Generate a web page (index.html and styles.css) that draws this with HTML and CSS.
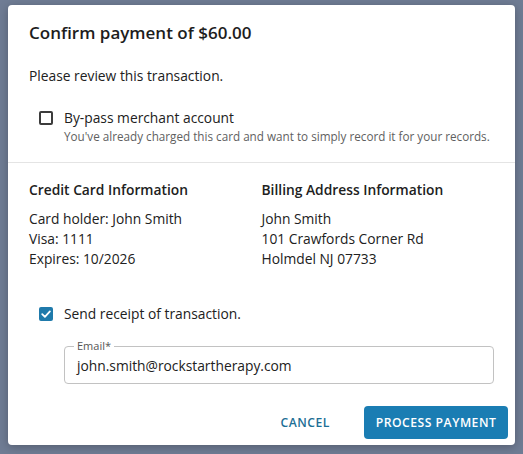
FILE: index.html
```html
<!DOCTYPE html>
<html lang="en">
<head>
<meta charset="utf-8">
<title>Confirm payment</title>
<link rel="stylesheet" href="styles.css">
</head>
<body>
<div class="modal" role="dialog" aria-labelledby="dlg-title">
  <div class="top">
    <h1 id="dlg-title" class="title">Confirm payment of $60.00</h1>
    <p class="intro">Please review this transaction.</p>
    <div class="check-row">
      <span class="box"></span>
      <div class="check-text">
        <div class="check-label">By-pass merchant account</div>
        <div class="check-help">You've already charged this card and want to simply record it for your records.</div>
      </div>
    </div>
  </div>
  <div class="divider"></div>
  <div class="bottom">
    <div class="info-grid">
      <div class="info-col">
        <h2 class="info-head">Credit Card Information</h2>
        <div class="info-line">Card holder: John Smith</div>
        <div class="info-line">Visa: 1111</div>
        <div class="info-line">Expires: 10/2026</div>
      </div>
      <div class="info-col">
        <h2 class="info-head">Billing Address Information</h2>
        <div class="info-line">John Smith</div>
        <div class="info-line">101 Crawfords Corner Rd</div>
        <div class="info-line">Holmdel NJ 07733</div>
      </div>
    </div>
    <div class="check-row receipt">
      <span class="box checked">
        <svg viewBox="0 0 14 14" width="14" height="14"><path d="M3.2 7.2 L5.9 9.8 L10.9 4.4" fill="none" stroke="#fff" stroke-width="1.8" stroke-linecap="round" stroke-linejoin="round"/></svg>
      </span>
      <div class="check-label">Send receipt of transaction.</div>
    </div>
    <fieldset class="field">
      <legend class="field-label">Email*</legend>
      <div class="field-value">john.smith@rockstartherapy.com</div>
    </fieldset>
  </div>
  <div class="actions">
    <button class="btn btn-text" type="button">CANCEL</button>
    <button class="btn btn-primary" type="button">PROCESS PAYMENT</button>
  </div>
</div>
</body>
</html>
```

FILE: styles.css
```css
html, body {
  margin: 0;
  padding: 0;
}
body {
  background: #6f7c94;
  font-family: "Open Sans", "Liberation Sans", sans-serif;
  color: #212121;
  padding: 5px 8px 9px 8px;
  height: 454px;
  box-sizing: border-box;
}
.modal {
  background: #fff;
  border-radius: 4px;
  box-shadow: 0 2px 10px rgba(0, 0, 0, 0.25);
  height: 440px;
  box-sizing: border-box;
  display: flex;
  flex-direction: column;
}
.top {
  padding: 16px 21px 0 21px;
}
.title {
  margin: 0;
  font-size: 17px;
  line-height: 24px;
  font-weight: 600;
  color: #1d1d1d;
}
.intro {
  margin: 21px 0 0 0;
  font-size: 13.8px;
  line-height: 20px;
}
.check-row {
  display: flex;
  align-items: flex-start;
  gap: 11px;
  margin: 22px 0 0 10px;
}
.box {
  flex: none;
  width: 14px;
  height: 14px;
  box-sizing: border-box;
  border: 2px solid #3c3c3c;
  border-radius: 2px;
  margin-top: 3px;
  display: flex;
  align-items: center;
  justify-content: center;
}
.box.checked {
  background: #1f7aab;
  border-color: #1f7aab;
}
.box.checked svg {
  flex: none;
}
.check-label {
  font-size: 13.8px;
  line-height: 20px;
}
.check-help {
  font-size: 11.7px;
  line-height: 16px;
  color: #5f5f5f;
}
.divider {
  height: 1px;
  background: #e4e4e4;
  margin-top: 18px;
}
.bottom {
  padding: 17px 21px 0 21px;
}
.info-grid {
  display: grid;
  grid-template-columns: 1fr 1fr;
}
.info-head {
  margin: 0 0 9px 0;
  font-size: 13.8px;
  line-height: 20px;
  font-weight: 600;
}
.info-line {
  font-size: 13.8px;
  line-height: 20px;
}
.receipt {
  margin-top: 35px;
}
.field {
  margin: 16px 0 0 35px;
  padding: 0 12px;
  border: 1px solid #c2c2c2;
  border-radius: 4px;
  min-width: 0;
}
.field-label {
  font-size: 11px;
  line-height: 12px;
  color: #555;
  padding: 0 3px;
  margin-left: -3px;
}
.field-value {
  font-size: 13.8px;
  line-height: 20px;
  padding: 4px 0 7px 0;
}
.actions {
  margin-top: auto;
  display: flex;
  justify-content: flex-end;
  align-items: center;
  gap: 34px;
  padding: 0 7px 6px 0;
}
.btn {
  font-family: "Open Sans", "Liberation Sans", sans-serif;
  font-size: 12.2px;
  font-weight: 600;
  letter-spacing: 0.5px;
  border: none;
  border-radius: 4px;
  height: 33px;
  cursor: pointer;
}
.btn-text {
  background: transparent;
  color: #1d6f95;
  padding: 0;
}
.btn-primary {
  background: #1a7db3;
  color: #fff;
  width: 144px;
  padding: 0;
}
```
